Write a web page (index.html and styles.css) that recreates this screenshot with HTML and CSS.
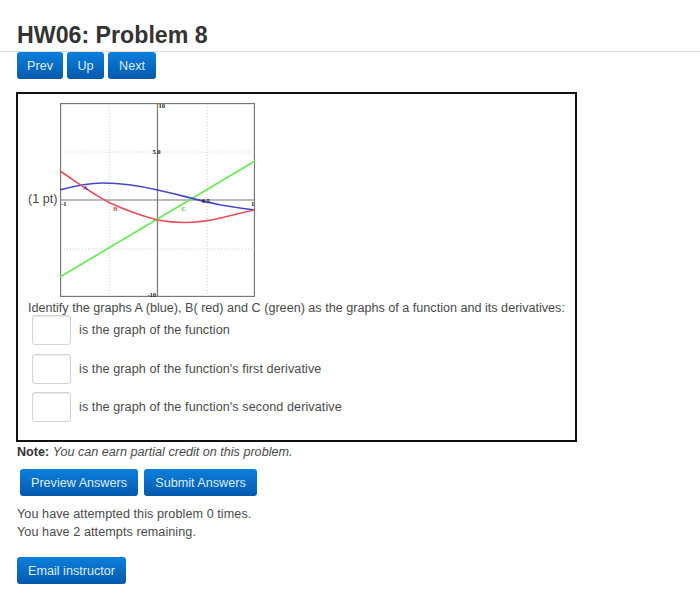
FILE: index.html
```html
<!DOCTYPE html>
<html lang="en">
<head>
<meta charset="utf-8">
<title>HW06: Problem 8</title>
<link rel="stylesheet" href="styles.css">
</head>
<body>
<header class="page-head">
  <h1 class="title">HW06: Problem 8</h1>
</header>
<main class="content">
  <nav class="nav-row">
    <a class="btn btn-prev">Prev</a>
    <a class="btn btn-up">Up</a>
    <a class="btn btn-next">Next</a>
  </nav>
  <section class="problem">
    <div class="graph-row">
      <span class="points">(1 pt)</span>
      <svg class="graph" viewBox="0 0 194 194" width="195" height="194" preserveAspectRatio="none">
        <rect class="frame" x="0.5" y="0.5" width="193" height="193"/>
        <path class="grid" d="M49 1V193M146.500 1V193M1 49H193M1 146H193"/>
        <path class="axis" d="M97 1V193M1 97H193"/>
        <path class="curve green" d="M0 174L194 58"/>
        <path class="curve blue" d="M0 87C14 83 28 80 43 80C62 80 80 83 97 87C120 92 135 97 160 102C172 104 184 106 194 107"/>
        <path class="curve red" d="M0 68C15 78 32 91 50 100C65 107 82 113 97 117C108 119 115 119.500 123 119.500C135 119.500 147 118 160 115C172 112 184 109 194 107"/>
        <text class="tick" x="98" y="5">10</text>
        <text class="tick" x="92" y="51">5.0</text>
        <text class="tick" x="1" y="103">-1</text>
        <text class="tick" x="190" y="103">1</text>
        <text class="tick" x="141" y="100">0.5</text>
        <text class="tick" x="87" y="194">-10</text>
        <text class="tick tick-blue" x="23" y="87">A</text>
        <text class="tick tick-red" x="53" y="108">B</text>
        <text class="tick tick-green" x="121" y="108">C</text>
      </svg>
    </div>
    <p class="prompt">Identify the graphs A (blue), B( red) and C (green) as the graphs of a function and its derivatives:</p>
    <div class="answers">
      <div class="answer"><span class="field"></span><span>is the graph of the function</span></div>
      <div class="answer"><span class="field"></span><span>is the graph of the function's first derivative</span></div>
      <div class="answer"><span class="field"></span><span>is the graph of the function's second derivative</span></div>
    </div>
  </section>
  <p class="note"><b>Note:</b> <i>You can earn partial credit on this problem.</i></p>
  <div class="submit-row">
    <a class="btn btn-preview">Preview Answers</a>
    <a class="btn btn-submit">Submit Answers</a>
  </div>
  <p class="attempts">You have attempted this problem 0 times.<br>You have 2 attempts remaining.</p>
  <a class="btn btn-email">Email instructor</a>
</main>
</body>
</html>
```
FILE: styles.css
```css
* { box-sizing: border-box; }
html, body { margin: 0; background: #fff; }
body {
  font-family: "Liberation Sans", Arial, sans-serif;
  font-size: 12.620px;
  color: #4a4a4a;
  height: 604px;
  overflow: hidden;
}
.page-head {
  padding: 22px 0 0 17px;
  height: 52px;
  border-bottom: 1px solid #ddd;
}
.title {
  margin: 0;
  font-size: 23.200px;
  line-height: 26px;
  font-weight: bold;
  color: #333;
}
.content { padding-left: 17px; }
.nav-row { display: flex; gap: 4px; height: 27px; }
.btn {
  display: flex;
  align-items: center;
  justify-content: center;
  height: 27px;
  border-radius: 3px;
  color: #dcecfa;
  font-size: 12.620px;
  background: linear-gradient(#0c7fdc, #0459ac);
}
.btn-prev { width: 46px; }
.btn-up { width: 37px; }
.btn-next { width: 48px; }
.problem {
  width: 561px;
  height: 350px;
  margin: 13px 0 0 -1px;
  padding: 9px 10px 0 10px;
  border: 2px solid #111;
}
.graph-row { display: flex; align-items: center; gap: 3px; height: 194px; }
.points { width: 29px; text-align: right; padding-bottom: 2px; white-space: nowrap; }
.graph { display: block; flex: none; }
.frame { fill: #fff; stroke: #777; stroke-width: 1.300; }
.grid { fill: none; stroke: #ccc; stroke-width: 1; stroke-dasharray: 1 2; }
.axis { fill: none; stroke: #777; stroke-width: 1.200; }
.curve { fill: none; stroke-width: 1.700; }
.green { stroke: #66ea55; }
.blue { stroke: #4448cc; }
.red { stroke: #e64f58; }
.tick { font-family: "Liberation Serif", serif; font-size: 6.500px; font-weight: bold; fill: #222; }
.tick-blue { fill: #3a3fb8; }
.tick-red { fill: #d8454a; }
.tick-green { fill: #4cc040; }
.prompt { margin: 4px 0 0; line-height: 15px; white-space: nowrap; }
.answers { display: flex; flex-direction: column; gap: 8.500px; margin-top: -1px; padding-left: 4px; letter-spacing: .08px; }
.answer { display: flex; align-items: center; gap: 8px; height: 30px; }
.field {
  width: 39px;
  height: 30px;
  border: 1px solid #d4d4d4;
  border-radius: 3px;
  box-shadow: inset 0 1px 1px rgba(0,0,0,.08);
  background: #fff;
}
.note { margin: 3px 0 0; line-height: 15px; }
.note b { color: #333; }
.submit-row { display: flex; gap: 6px; margin: 9px 0 0 3px; }
.btn-preview { width: 118px; }
.btn-submit { width: 113px; }
.attempts { margin: 9px 0 0; line-height: 18px; letter-spacing: .07px; }
.btn-email { width: 109px; margin-top: 16px; }
```
